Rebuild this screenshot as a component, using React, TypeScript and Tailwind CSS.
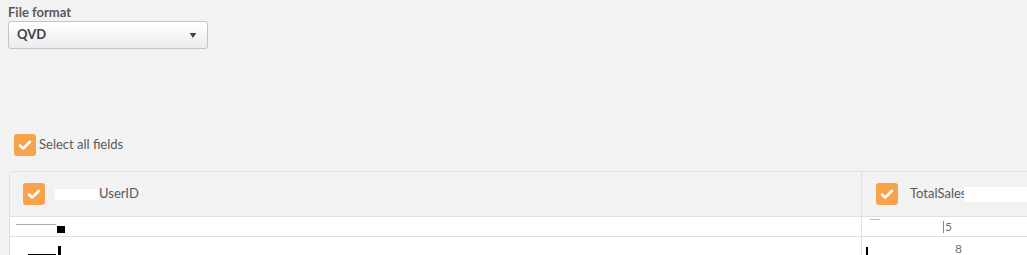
import React from 'react';

function Check({ className = '' }: { className?: string }) {
  return (
    <span
      className={`flex h-[22px] w-[22px] shrink-0 items-center justify-center rounded-[3px] bg-[#f9a24c] ${className}`}
    >
      <svg viewBox="0 0 16 16" className="h-[16px] w-[16px]">
        <path
          d="M3 8.5l3.2 3L13 4.8"
          fill="none"
          stroke="#ffffff"
          strokeWidth="2.6"
          strokeLinecap="round"
          strokeLinejoin="round"
        />
      </svg>
    </span>
  );
}

export default function App() {
  return (
    <div className="h-[255px] w-[1027px] overflow-hidden bg-[#f2f2f2] font-['Lato','Liberation_Sans',sans-serif] text-[#595959]">
      {/* File format */}
      <div className="px-[8px] pt-[4px]">
        <div className="text-[13px] font-bold leading-[16px]">File format</div>
        <div className="mt-[1px] flex h-[28px] w-[200px] items-center justify-between rounded-[3px] border border-[#c4c4c4] bg-gradient-to-b from-[#ffffff] to-[#ececec] pl-[8px] pr-[10px]">
          <span className="text-[13px] font-bold text-[#404040]">QVD</span>
          <svg viewBox="0 0 8 6" className="h-[5px] w-[8px]">
            <path d="M0 0h8L4 6z" fill="#404040" />
          </svg>
        </div>
      </div>

      {/* Select all */}
      <div className="mt-[85px] flex items-center gap-[3px] pl-[14px]">
        <Check />
        <span className="text-[13px]">Select all fields</span>
      </div>

      {/* Table */}
      <div className="mt-[15px] ml-[9px] overflow-hidden rounded-tl-[4px] border-l border-t border-[#e0e0e0]">
        <div className="flex h-[45px] border-b border-[#e0e0e0] bg-[#f2f2f2]">
          <div className="flex w-[852px] items-center border-r border-[#e0e0e0] pl-[13px]">
            <Check />
            <span className="ml-[10px] h-[11px] w-[44px] bg-white" />
            <span className="text-[13px]">UserID</span>
          </div>
          <div className="flex flex-1 items-center pl-[14px]">
            <Check />
            <span className="ml-[12px] text-[13px]">TotalSales</span>
            <span className="ml-[-2px] h-[15px] flex-1 bg-white" />
          </div>
        </div>

        <div className="flex h-[20px] border-b border-[#e0e0e0] bg-white">
          <div className="flex w-[852px] items-center border-r border-[#e0e0e0]">
            <span className="ml-[6px] mt-[-5px] h-[1px] w-[40px] bg-[#aaaaaa]" />
            <span className="ml-[1px] mt-[5px] h-[7px] w-[8px] bg-black" />
          </div>
          <div className="flex flex-1 items-center">
            <span className="ml-[8px] mt-[-14px] h-[1px] w-[10px] bg-[#bbbbbb]" />
            <span className="ml-[63px] h-[12px] w-[1px] bg-[#888888]" />
            <span className="ml-[1px] text-[12px] leading-[14px] text-[#707070]">5</span>
          </div>
        </div>

        <div className="flex h-[19px] bg-white">
          <div className="flex w-[852px] items-end border-r border-[#e0e0e0] pb-[1px]">
            <span className="ml-[18px] h-[1px] w-[28px] bg-black" />
            <span className="ml-[2px] h-[9px] w-[3px] bg-black" />
          </div>
          <div className="flex flex-1 items-end">
            <span className="ml-[4px] h-[9px] w-[2px] bg-black" />
            <span className="ml-[87px] text-[12px] leading-[14px] text-[#707070]">8</span>
          </div>
        </div>
      </div>
    </div>
  );
}
